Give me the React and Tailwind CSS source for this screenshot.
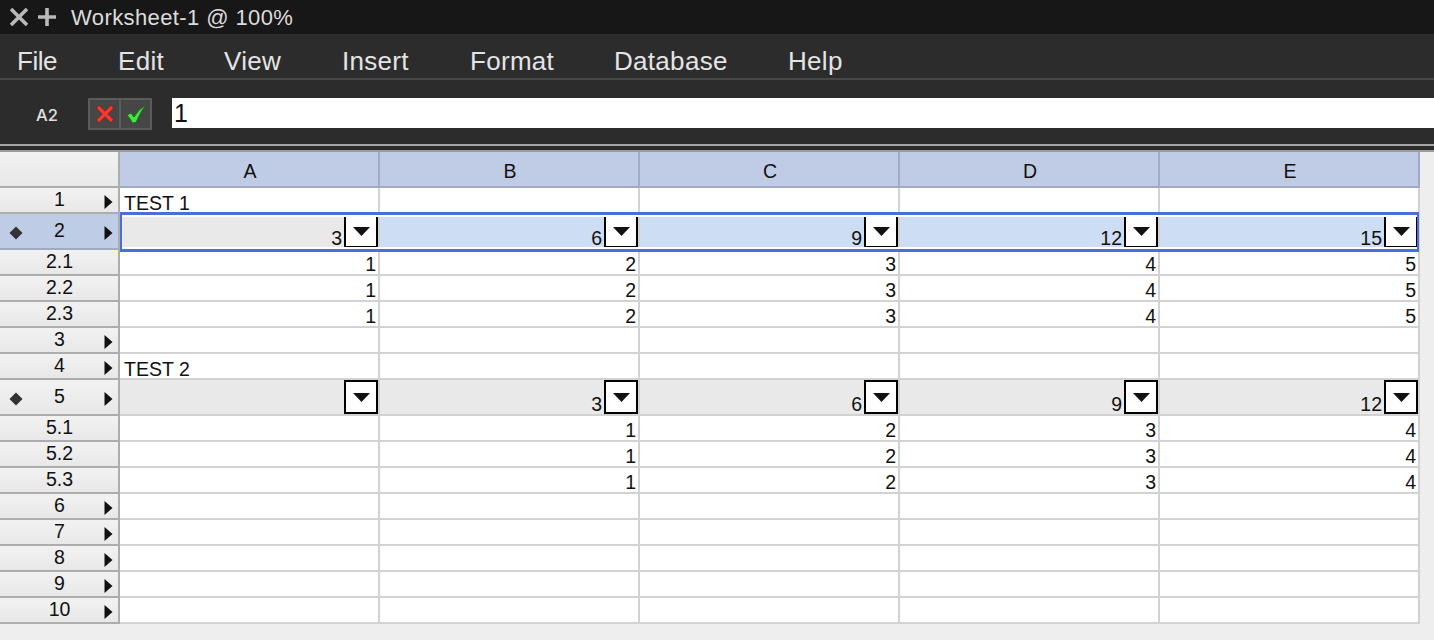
const menu = [
  ['File', 'w-[101px] tracking-[-0.5px]'],
  ['Edit', 'w-[106px]'],
  ['View', 'w-[118px]'],
  ['Insert', 'w-[128px]'],
  ['Format', 'w-[144px]'],
  ['Database', 'w-[174px]'],
  ['Help', 'w-[80px]'],
];

const columns = ['A', 'B', 'C', 'D', 'E'];

const rows = [
  { label: '1', arrow: true, text: 'TEST 1', cells: [] },
  { label: '2', arrow: true, summary: true, active: true, cells: ['3', '6', '9', '12', '15'] },
  { label: '2.1', cells: ['1', '2', '3', '4', '5'] },
  { label: '2.2', cells: ['1', '2', '3', '4', '5'] },
  { label: '2.3', cells: ['1', '2', '3', '4', '5'] },
  { label: '3', arrow: true, cells: [] },
  { label: '4', arrow: true, text: 'TEST 2', cells: [] },
  { label: '5', arrow: true, summary: true, cells: ['', '3', '6', '9', '12'] },
  { label: '5.1', cells: ['', '1', '2', '3', '4'] },
  { label: '5.2', cells: ['', '1', '2', '3', '4'] },
  { label: '5.3', cells: ['', '1', '2', '3', '4'] },
  { label: '6', arrow: true, cells: [] },
  { label: '7', arrow: true, cells: [] },
  { label: '8', arrow: true, cells: [] },
  { label: '9', arrow: true, cells: [] },
  { label: '10', arrow: true, cells: [] },
];

function Arrow() {
  return (
    <svg width="9" height="15" viewBox="0 0 9 15" className="absolute left-[104px] top-[calc(50%+1.5px)] -translate-y-1/2">
      <path d="M0.5 0.5 L8.5 7.5 L0.5 14.5 Z" fill="#111" />
    </svg>
  );
}

function Diamond() {
  return (
    <svg width="14" height="14" viewBox="0 0 14 14" className="absolute left-[9px] top-[calc(50%+1.5px)] -translate-y-1/2">
      <path d="M7 0.5 L13.5 7 L7 13.5 L0.5 7 Z" fill="#333" />
    </svg>
  );
}

function Dropdown({ active, last }) {
  return (
    <div
      className={`absolute right-0 bottom-0 flex justify-center w-[34px] pt-[11px] bg-white border-black ${
        active ? 'h-[32px] border-l-2 border-r-2 border-b-2' : 'h-[34px] border-2'
      } ${active && last ? 'border-r-0 border-b' : ''}`}
    >
      <svg width="17" height="9" viewBox="0 0 17 9">
        <path d="M0 0 L17 0 L8.5 9 Z" fill="#111" />
      </svg>
    </div>
  );
}

function RowHeader({ row }) {
  const height = row.summary ? 'h-[36px]' : 'h-[26px]';
  const bg = row.active
    ? 'bg-[#bfcce6] border-b-[#a0aac0]'
    : 'bg-gradient-to-b from-[#f2f2f2] to-[#e8e8e8] border-b-[#adadad]';
  return (
    <div className={`relative flex shrink-0 justify-center items-start w-[120px] pl-[1px] border-r-2 border-r-[#adadad] border-b-2 ${height} ${bg}`}>
      {row.summary && <Diamond />}
      <span className={`${row.summary ? 'mt-[5px]' : 'mt-[0px]'} text-[19.5px] leading-[22px] text-[#111]`}>{row.label}</span>
      {row.arrow && <Arrow />}
    </div>
  );
}

function Row({ row }) {
  const height = row.summary ? 'h-[36px]' : 'h-[26px]';
  return (
    <div className={`relative flex ${row.active ? 'z-10' : ''}`}>
      <RowHeader row={row} />
      {columns.map((col, i) => {
        const bg = row.summary
          ? row.active
            ? i === 0
              ? 'bg-[#e9e9e9]'
              : 'bg-[#cdddf3]'
            : 'bg-[#e9e9e9]'
          : 'bg-white';
        return (
          <div
            key={col}
            className={`relative w-[260px] shrink-0 border-r-2 border-b-2 border-[#d2d2d2] text-[19.5px] leading-[22px] text-[#111] ${height} ${bg}`}
          >
            {i === 0 && row.text && (
              <span className="absolute left-[4px] top-[4px] whitespace-nowrap">{row.text}</span>
            )}
            {row.cells[i] && (
              <span className={`absolute whitespace-nowrap ${row.summary ? 'right-[36px] top-[13px]' : 'right-[2px] top-[3px]'}`}>
                {row.cells[i]}
              </span>
            )}
            {row.summary && <Dropdown active={row.active} last={i === 4} />}
          </div>
        );
      })}
      {row.active && (
        <div className="absolute left-[120px] top-[-2px] w-[1299px] h-[40px] border-y-[3px] border-x-2 border-[#4a6fd8] pointer-events-none">
          <div className="h-full border-y-2 border-white" />
        </div>
      )}
    </div>
  );
}

export default function App() {
  return (
    <div className="w-[1434px] h-[640px] overflow-hidden bg-[#eeeeee] font-['Liberation_Sans',sans-serif]">
      <div className="flex items-center h-[34px] bg-[#171717] pl-[10px] text-[#dcdcdc]">
        <svg width="18" height="18" viewBox="0 0 18 18" className="mr-[10px]">
          <path d="M1 1 L17 17 M17 1 L1 17" stroke="#b9b9b9" strokeWidth="3.6" />
        </svg>
        <svg width="18" height="18" viewBox="0 0 18 18" className="mr-[15px]">
          <path d="M9 0 V18 M0 9 H18" stroke="#b9b9b9" strokeWidth="3.6" />
        </svg>
        <span className="text-[22px] leading-none tracking-[0.4px] mt-[1px]">Worksheet-1 @ 100%</span>
      </div>

      <div className="flex items-center h-[46px] bg-[#2c2c2c] pl-[17px] pt-[9px] border-b-2 border-[#474747] text-[#e4e4e4] text-[26px] tracking-[0.3px]">
        {menu.map(([name, w]) => (
          <span key={name} className={`${w} shrink-0 leading-none`}>{name}</span>
        ))}
      </div>

      <div className="flex items-center h-[64px] bg-[#2c2c2c] pt-[2px]">
        <span className="w-[88px] shrink-0 pl-[36px] mt-[5px] text-[16.5px] font-medium text-[#e0e0e0] font-['Inter',sans-serif]">A2</span>
        <div className="flex shrink-0 w-[64px] h-[32px] mt-[2px] p-[2px] gap-[2px] bg-[#5b5b5b]">
          <div className="flex flex-1 items-center justify-center bg-[#464646]">
            <svg width="20" height="20" viewBox="0 0 20 20">
              <path d="M2.5 2.5 L17.5 17.5 M17.5 2.5 L2.5 17.5" stroke="#7a2a24" strokeWidth="4.6" />
              <path d="M3 3 L17 17 M17 3 L3 17" stroke="#f5392c" strokeWidth="3.2" />
            </svg>
          </div>
          <div className="flex flex-1 items-center justify-center bg-[#464646]">
            <svg width="22" height="20" viewBox="0 0 22 20">
              <path d="M2 11 L6 9 L9 13 Q13 6 20.5 1 Q15 9 11 18.5 L7.5 19 Q5 14.5 2 11 Z" fill="#3fe83f" stroke="#1f6a1f" strokeWidth="1" strokeLinejoin="round" />
            </svg>
          </div>
        </div>
        <div className="ml-[20px] flex-1 h-[30px] bg-white pl-[2px] text-[25px] leading-[30px] text-[#111]">1</div>
      </div>

      <div className="h-[2px] bg-[#a6a6a6]" />
      <div className="h-[4px] bg-[#2c2c2c]" />
      <div className="h-[2px] bg-[#9c9c9c]" />

      <div className="flex h-[36px]">
        <div className="w-[120px] shrink-0 border-r-2 border-b-2 border-[#adadad] bg-gradient-to-b from-[#f2f2f2] to-[#e8e8e8]" />
        {columns.map((col) => (
          <div
            key={col}
            className="flex w-[260px] shrink-0 items-center justify-center pl-[2px] pt-[5px] border-r-2 border-b-2 border-[#a0aac4] bg-[#c0cce5] text-[19.5px] text-[#111]"
          >
            {col}
          </div>
        ))}
      </div>

      {rows.map((row) => (
        <Row key={row.label} row={row} />
      ))}
    </div>
  );
}
